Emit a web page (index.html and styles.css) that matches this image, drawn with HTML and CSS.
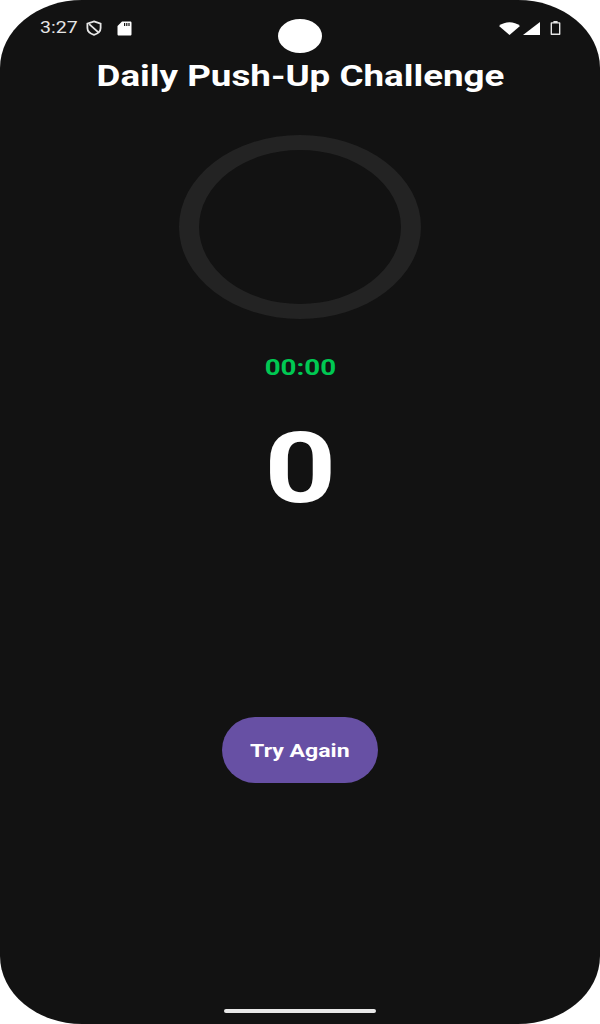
FILE: index.html
```html
<!DOCTYPE html>
<html lang="en">
<head>
<meta charset="utf-8">
<title>Daily Push-Up Challenge</title>
<link rel="stylesheet" href="styles.css">
</head>
<body>
<main class="screen">
  <div class="camera"></div>
  <header class="status">
    <div class="status-left">
      <span class="clock">3:27</span>
      <svg class="icon-shield" viewBox="0 0 16 16"><path d="M8 1.4 14.6 3.6V8C14.6 11.2 12 13.6 8 14.8 4 13.6 1.4 11.2 1.4 8V3.6Z" fill="none" stroke="#e6e6e6" stroke-width="1.8"/><path d="M3.2 4.2 12.4 12.4" stroke="#e6e6e6" stroke-width="1.8"/></svg>
      <svg class="icon-sd" viewBox="0 0 15 15"><path d="M5 .5H13.2C14 .5 14.5 1 14.5 1.8V13.2C14.5 14 14 14.5 13.2 14.5H1.8C1 14.5 .5 14 .5 13.2V5ZM7 2V5H8.2V2ZM9.2 2V5H10.4V2ZM11.4 2V5H12.6V2Z" fill="#fff" fill-rule="evenodd"/></svg>
    </div>
    <div class="status-right">
      <svg class="icon-wifi" viewBox="0 0 21 13"><path d="M0 3.9C6-1.1 15-1.1 21 3.9L10.5 13Z" fill="#fff"/></svg>
      <svg class="icon-signal" viewBox="0 0 17 13"><path d="M17 0V13H0Z" fill="#fff"/></svg>
      <svg class="icon-battery" viewBox="0 0 11 14"><path d="M3.4 0H7.6V1.2H9.4C10 1.2 10.4 1.6 10.4 2.2V13C10.4 13.6 10 14 9.4 14H1.6C1 14 .6 13.6 .6 13V2.2C.6 1.6 1 1.2 1.6 1.2H3.4ZM2 2.6V12.6H9V2.6Z" fill="#e6e6e6" fill-rule="evenodd"/></svg>
    </div>
  </header>
  <h1 class="title">Daily Push-Up Challenge</h1>
  <div class="ring"></div>
  <div class="timer">00:00</div>
  <div class="count">0</div>
  <button class="action" type="button"><span>Try Again</span></button>
  <div class="home-indicator"></div>
</main>
</body>
</html>
```
FILE: styles.css
```css
* { box-sizing: border-box; }
html, body { margin: 0; height: 100%; background: #fff; }
.screen {
  position: relative;
  width: 600px;
  height: 1024px;
  overflow: hidden;
  display: flex;
  flex-direction: column;
  align-items: center;
  background: #121212;
  border-radius: 82px / 68px;
  font-family: Roboto, "Liberation Sans", sans-serif;
  color: #fff;
}
.camera {
  position: absolute;
  top: 19px;
  left: 278px;
  width: 44px;
  height: 34px;
  border-radius: 50%;
  background: #fff;
}
.status {
  width: 100%;
  height: 54px;
  flex: none;
  padding: 18px 39px 0 40px;
  display: flex;
  justify-content: space-between;
  align-items: flex-start;
}
.status-left, .status-right { display: flex; align-items: center; height: 20px; }
.clock {
  font-size: 16px;
  line-height: 20px;
  color: #e6e6e6;
  width: 37px;
  white-space: nowrap;
  transform: scaleX(1.22);
  transform-origin: left center;
}
.icon-shield { width: 16px; height: 16px; margin-left: 9px; }
.icon-sd { width: 15px; height: 15px; margin-left: 15px; }
.icon-wifi { width: 21px; height: 13px; }
.icon-signal { width: 17px; height: 13px; margin-left: 3px; }
.icon-battery { width: 11px; height: 14px; margin-left: 10px; }
.title {
  margin: 0;
  font-size: 30px;
  line-height: 44px;
  font-weight: 700;
  white-space: nowrap;
  transform: scaleX(1.225);
}
.ring {
  margin-top: 37px;
  width: 242px;
  height: 184px;
  border-radius: 50%;
  border: solid #232323;
  border-width: 15px 20px;
  flex: none;
}
.timer {
  margin-top: 34px;
  font-size: 22px;
  line-height: 30px;
  font-weight: 700;
  color: #00c853;
  transform: scaleX(1.26);
}
.count {
  margin-top: 27px;
  font-size: 99px;
  line-height: 116px;
  font-weight: 700;
  transform: scaleX(1.27);
}
.action {
  margin-top: 191px;
  width: 156px;
  height: 66px;
  flex: none;
  border: 0;
  padding: 0;
  border-radius: 33px;
  background: #6750a4;
  color: #fff;
  font-family: inherit;
  font-size: 18px;
  font-weight: 700;
}
.action span { display: inline-block; transform: scaleX(1.28); }
.home-indicator {
  position: absolute;
  left: 224px;
  bottom: 11px;
  width: 152px;
  height: 4px;
  border-radius: 2px;
  background: #e8e8e8;
}
```
